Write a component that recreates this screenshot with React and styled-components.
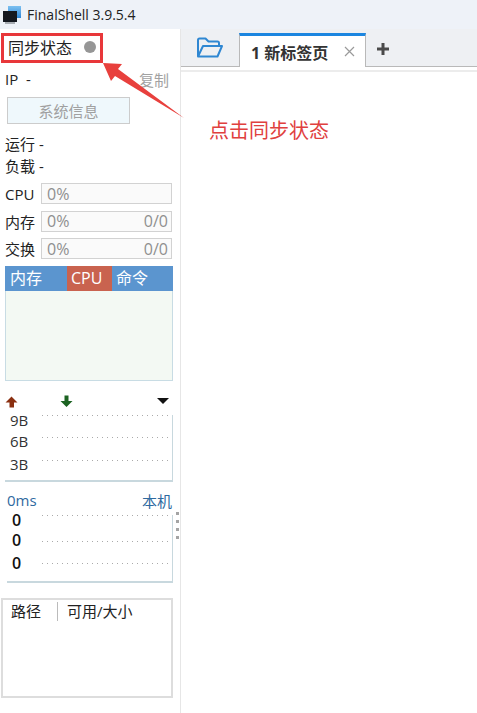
import React from 'react';
import styled, { createGlobalStyle } from 'styled-components';

const GlobalStyle = createGlobalStyle`
  html, body {
    margin: 0;
    background: #fff;
  }
  body {
    font-family: "Open Sans", "Noto Sans CJK SC", sans-serif;
    color: #222;
  }
`;

const Window = styled.div`
  position: relative;
  width: 477px;
  height: 713px;
  overflow: hidden;
  display: flex;
  flex-direction: column;
`;

const TitleBar = styled.div`
  height: 29px;
  flex: none;
  display: flex;
  align-items: center;
  gap: 6px;
  padding-left: 3px;
  background: #eef2f8;
  font-size: 14px;
  color: #222;
`;

const Body = styled.div`
  flex: 1;
  display: flex;
  min-height: 0;
`;

const Sidebar = styled.aside`
  position: relative;
  width: 181px;
  flex: none;
  box-sizing: border-box;
  border-right: 1px solid #e6e6e6;
  display: flex;
  flex-direction: column;
  font-size: 15px;
`;

const SyncRow = styled.div`
  height: 36px;
  flex: none;
  display: flex;
  align-items: center;
  padding-left: 8px;
  gap: 12px;
  font-size: 16px;
`;

const StatusDot = styled.span`
  width: 12px;
  height: 12px;
  border-radius: 50%;
  background: #969696;
`;

const IpRow = styled.div`
  height: 28px;
  flex: none;
  display: flex;
  align-items: center;
  justify-content: space-between;
  padding: 0 11px 0 5px;
`;

const CopyLabel = styled.span`
  color: #a2a2a2;
`;

const InfoButton = styled.button`
  width: 123px;
  height: 27px;
  flex: none;
  margin: 4px 0 0 7px;
  padding: 0;
  border: 1px solid #cccccc;
  background: #eff8fc;
  color: #a0a0a0;
  font: inherit;
`;

const Stats = styled.div`
  margin-top: 9px;
`;

const StatLine = styled.div`
  height: 22px;
  line-height: 22px;
  padding-left: 5px;
`;

const Meters = styled.div`
  display: flex;
  flex-direction: column;
  gap: 6.5px;
  margin-top: 6px;
`;

const MeterRow = styled.div`
  height: 21px;
  display: flex;
  align-items: center;
  padding-left: 5px;
`;

const MeterLabel = styled.span`
  width: 36px;
  flex: none;
`;

const Meter = styled.div`
  width: 131px;
  height: 21px;
  box-sizing: border-box;
  border: 1px solid #d2d2d2;
  background: #fafafa;
  color: #8f8f8f;
  font-size: 16px;
  display: flex;
  align-items: center;
  justify-content: space-between;
  padding: 0 3px 0 5px;
`;

const ProcessPanel = styled.div`
  width: 168px;
  height: 115px;
  flex: none;
  margin: 7px 0 0 5px;
  box-sizing: border-box;
  border: 1px solid #c8dce4;
  border-top: none;
  background: #f3f9f3;
`;

const ProcessHead = styled.div`
  height: 25px;
  margin: 0 -1px;
  display: flex;
  background: #5b95cf;
  color: #fff;
`;

const ProcessTab = styled.div`
  width: ${(p) => p.$width}px;
  background: ${(p) => (p.$active ? '#c9634f' : 'transparent')};
  line-height: 25px;
  padding-left: ${(p) => p.$pad}px;
  box-sizing: border-box;
  font-size: 16px;
`;

const NetHead = styled.div`
  height: 30px;
  flex: none;
  margin-top: 4px;
  display: flex;
  align-items: center;
  padding: 2px 11px 0 5px;
  box-sizing: border-box;
`;

const NetArrow = styled.svg`
  width: 13px;
  height: 13px;
  flex: none;
`;

const DownSlot = styled.div`
  margin-left: 42px;
  flex: 1;
  display: flex;
`;

const Chart = styled.div`
  width: ${(p) => p.$width}px;
  margin-left: ${(p) => 173 - p.$width}px;
  height: ${(p) => p.$height}px;
  flex: none;
  box-sizing: border-box;
  border-right: 1px solid #c8d8de;
  border-bottom: 2px solid #c8d8de;
  display: flex;
  flex-direction: column;
`;

const ChartRow = styled.div`
  height: ${(p) => p.$height}px;
  flex: none;
  display: flex;
  align-items: flex-start;
  padding-left: ${(p) => p.$pad}px;
`;

const ChartLabel = styled.span`
  width: ${(p) => p.$width}px;
  flex: none;
  line-height: 10px;
  margin-top: ${(p) => p.$top}px;
  font-size: ${(p) => p.$size}px;
  color: ${(p) => p.$color || '#333'};
  font-weight: ${(p) => p.$weight || 400};
`;

const DotLine = styled.span`
  flex: 1;
  height: 1px;
  margin-right: 4px;
  background: repeating-linear-gradient(to right, #aaa 0 1px, transparent 1px 5px);
`;

const LatencyHead = styled.div`
  width: 173px;
  height: 18px;
  flex: none;
  box-sizing: border-box;
  margin: 9px 0 6px;
  padding: 0 1px 0 7px;
  display: flex;
  justify-content: space-between;
  align-items: center;
  color: #2f6a9f;
`;

const DiskPanel = styled.div`
  width: 172px;
  height: 100px;
  flex: none;
  margin: 15px 0 0 1px;
  box-sizing: border-box;
  border: 2px solid #dddddd;
`;

const DiskHead = styled.div`
  display: flex;
  align-items: center;
  height: 19px;
  margin-top: 2px;
`;

const DiskColumn = styled.span`
  width: ${(p) => p.$width}px;
  box-sizing: border-box;
  padding-left: ${(p) => p.$pad}px;
  border-right: ${(p) => (p.$divided ? '1px solid #bbb' : 'none')};
  line-height: 19px;
`;

const Grip = styled.div`
  position: absolute;
  left: 176px;
  top: 483px;
  width: 3px;
  height: 27px;
  background: repeating-linear-gradient(to bottom, #a4a4a4 0 3px, transparent 3px 8px);
`;

const Workspace = styled.main`
  flex: 1;
  min-width: 0;
  display: flex;
  flex-direction: column;
`;

const TabBar = styled.div`
  height: 38px;
  flex: none;
  display: flex;
  align-items: flex-end;
  background: #eef0f3;
  box-sizing: border-box;
  border-bottom: 1px solid #b9b9b9;
`;

const FolderSlot = styled.div`
  width: 58px;
  height: 37px;
  display: flex;
  align-items: center;
  justify-content: center;
  box-sizing: border-box;
`;

const Tab = styled.div`
  width: 127px;
  height: 34px;
  margin-bottom: -1px;
  box-sizing: border-box;
  border-top: 3px solid #1c86e0;
  border-left: 1px solid #b9b9b9;
  border-right: 1px solid #b9b9b9;
  background: #fff;
  display: flex;
  align-items: center;
  padding: 0 10px 0 11px;
  font-size: 16px;
  font-weight: 700;
  color: #333;
`;

const TabTitle = styled.span`
  flex: 1;
`;

const AddTab = styled.div`
  margin-left: 10px;
  height: 34px;
  display: flex;
  align-items: center;
`;

const Canvas = styled.div`
  flex: 1;
  margin-top: 3px;
  border-top: 2px solid #ececec;
`;

const Callout = styled.div`
  position: absolute;
  left: 209px;
  top: 119px;
  font-size: 20px;
  line-height: 24px;
  color: #e0403e;
`;

const SyncMark = styled.div`
  position: absolute;
  left: 1px;
  top: 33px;
  width: 102px;
  height: 30px;
  box-sizing: border-box;
  border: 3px solid #e8373a;
`;

const ArrowMark = styled.svg`
  position: absolute;
  left: 95px;
  top: 50px;
  width: 100px;
  height: 80px;
`;

const Chevron = styled.span`
  width: 0;
  height: 0;
  border-left: 6px solid transparent;
  border-right: 6px solid transparent;
  border-top: 6px solid #111;
`;

const AppIcon = () => (
  <svg width="18" height="18" viewBox="0 0 18 18">
    <defs>
      <linearGradient id="appBlue" x1="0" y1="0" x2="0" y2="1">
        <stop offset="0" stopColor="#7cc0f0" />
        <stop offset="1" stopColor="#2f86d6" />
      </linearGradient>
    </defs>
    <rect x="5" y="0" width="13" height="12" fill="url(#appBlue)" />
    <rect x="0" y="5" width="14" height="11" fill="#14181f" />
    <rect x="2" y="16" width="10" height="2" fill="#a8adb3" />
  </svg>
);

const FolderIcon = () => (
  <svg width="28" height="22" viewBox="0 0 28 22" fill="none" stroke="#2f87d2" strokeWidth="2" strokeLinejoin="round">
    <path d="M2 19V3a1.5 1.5 0 0 1 1.5-1.5h6l3 3h9A1.5 1.5 0 0 1 23 6v3" />
    <path d="M2 19.5 7 9h19l-4.5 10.5z" />
  </svg>
);

const UpArrow = () => (
  <NetArrow viewBox="0 0 13 13">
    <path d="M6.5 1.5 12.5 7.5H9V12.5H4.5V7.5H.5z" fill="#8a2f10" />
  </NetArrow>
);

const DownArrow = () => (
  <NetArrow viewBox="0 0 13 13">
    <path d="M4.5 .5H8.5V6H12.5L6.5 12 .5 6H4.5z" fill="#1d6322" />
  </NetArrow>
);

const trafficRows = [
  { label: '9B', height: 22, top: 0 },
  { label: '6B', height: 23, top: -1 },
  { label: '3B', height: 20, top: -1 },
];

const latencyRows = [
  { label: '0', height: 26, top: 0 },
  { label: '0', height: 22, top: -6 },
  { label: '0', height: 18, top: -5 },
];

export default function App() {
  return (
    <Window>
      <GlobalStyle />
      <TitleBar>
        <AppIcon />
        FinalShell 3.9.5.4
      </TitleBar>
      <Body>
        <Sidebar>
          <SyncRow>
            同步状态
            <StatusDot />
          </SyncRow>
          <IpRow>
            <span>IP&nbsp;&nbsp;-</span>
            <CopyLabel>复制</CopyLabel>
          </IpRow>
          <InfoButton>系统信息</InfoButton>
          <Stats>
            <StatLine>运行 -</StatLine>
            <StatLine>负载 -</StatLine>
          </Stats>
          <Meters>
            <MeterRow>
              <MeterLabel>CPU</MeterLabel>
              <Meter>0%</Meter>
            </MeterRow>
            <MeterRow>
              <MeterLabel>内存</MeterLabel>
              <Meter>
                <span>0%</span>
                <span>0/0</span>
              </Meter>
            </MeterRow>
            <MeterRow>
              <MeterLabel>交换</MeterLabel>
              <Meter>
                <span>0%</span>
                <span>0/0</span>
              </Meter>
            </MeterRow>
          </Meters>
          <ProcessPanel>
            <ProcessHead>
              <ProcessTab $width={62} $pad={5}>内存</ProcessTab>
              <ProcessTab $width={45} $pad={4} $active>CPU</ProcessTab>
              <ProcessTab $width={61} $pad={4}>命令</ProcessTab>
            </ProcessHead>
          </ProcessPanel>
          <NetHead>
            <UpArrow />
            <DownSlot>
              <DownArrow />
            </DownSlot>
            <Chevron />
          </NetHead>
          <Chart $width={168} $height={67}>
            {trafficRows.map((row) => (
              <ChartRow key={row.label} $height={row.height} $pad={5}>
                <ChartLabel $width={32} $top={row.top} $size={15}>{row.label}</ChartLabel>
                <DotLine />
              </ChartRow>
            ))}
          </Chart>
          <LatencyHead>
            <span>0ms</span>
            <span>本机</span>
          </LatencyHead>
          <Chart $width={166} $height={68}>
            {latencyRows.map((row, i) => (
              <ChartRow key={i} $height={row.height} $pad={5}>
                <ChartLabel $width={30} $top={row.top} $size={16} $color="#111" $weight={600}>{row.label}</ChartLabel>
                <DotLine />
              </ChartRow>
            ))}
          </Chart>
          <DiskPanel>
            <DiskHead>
              <DiskColumn $width={55} $pad={8} $divided>路径</DiskColumn>
              <DiskColumn $width={100} $pad={9}>可用/大小</DiskColumn>
            </DiskHead>
          </DiskPanel>
          <Grip />
        </Sidebar>
        <Workspace>
          <TabBar>
            <FolderSlot>
              <FolderIcon />
            </FolderSlot>
            <Tab>
              <TabTitle>1 新标签页</TabTitle>
              <svg width="11" height="11" viewBox="0 0 11 11" stroke="#9a9a9a" strokeWidth="1.2">
                <path d="M1 1l9 9M10 1l-9 9" />
              </svg>
            </Tab>
            <AddTab>
              <svg width="14" height="14" viewBox="0 0 14 14" fill="#4a4a4a">
                <path d="M5.5 1h3v4.5H13v3H8.5V13h-3V8.5H1v-3h4.5z" />
              </svg>
            </AddTab>
          </TabBar>
          <Canvas />
        </Workspace>
      </Body>
      <SyncMark />
      <ArrowMark viewBox="0 0 100 80">
        <path d="M8 13 27 14 23 19 89 68 20 26 16 31z" fill="#e8403d" />
      </ArrowMark>
      <Callout>点击同步状态</Callout>
    </Window>
  );
}
